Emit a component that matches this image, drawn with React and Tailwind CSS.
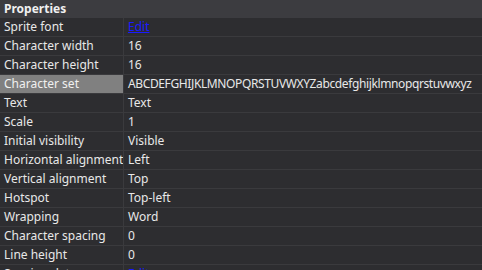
const rows = [
  ['Sprite font', 'Edit', 'link'],
  ['Character width', '16'],
  ['Character height', '16'],
  ['Character set', 'ABCDEFGHIJKLMNOPQRSTUVWXYZabcdefghijklmnopqrstuvwxyz', 'selected'],
  ['Text', 'Text'],
  ['Scale', '1'],
  ['Initial visibility', 'Visible'],
  ['Horizontal alignment', 'Left'],
  ['Vertical alignment', 'Top'],
  ['Hotspot', 'Top-left'],
  ['Wrapping', 'Word'],
  ['Character spacing', '0'],
  ['Line height', '0'],
  ['Spacing data', 'Edit', 'link'],
];

function Row({ label, value, kind }) {
  return (
    <div className="flex h-[19px] shrink-0 border-b border-[#3a3a3d]">
      <div
        className={`w-[124px] shrink-0 border-r border-[#3a3a3d] pl-[4px] leading-[18px] whitespace-nowrap overflow-hidden ${
          kind === 'selected' ? 'bg-[#808080] text-[#f0f0f0]' : ''
        }`}
      >
        {label}
      </div>
      <div
        className={`pl-[4px] leading-[18px] whitespace-nowrap ${
          kind === 'selected' ? 'tracking-[-0.38px]' : ''
        }`}
      >
        {kind === 'link' ? (
          <a href="#" className="text-[#1a1aff] underline">
            {value}
          </a>
        ) : (
          value
        )}
      </div>
    </div>
  );
}

export default function App() {
  return (
    <div
      className="w-[482px] h-[270px] overflow-hidden bg-[#2d2d30] text-[#e8e8e8] text-[12px] flex flex-col"
      style={{ fontFamily: '"Noto Sans", "Open Sans", sans-serif' }}
    >
      <div className="h-[18px] shrink-0 bg-[#3c3c40] pl-[4px] font-bold text-[12px] leading-[17px] text-[#f0f0f0]">
        Properties
      </div>
      {rows.map(([label, value, kind]) => (
        <Row key={label} label={label} value={value} kind={kind} />
      ))}
    </div>
  );
}
